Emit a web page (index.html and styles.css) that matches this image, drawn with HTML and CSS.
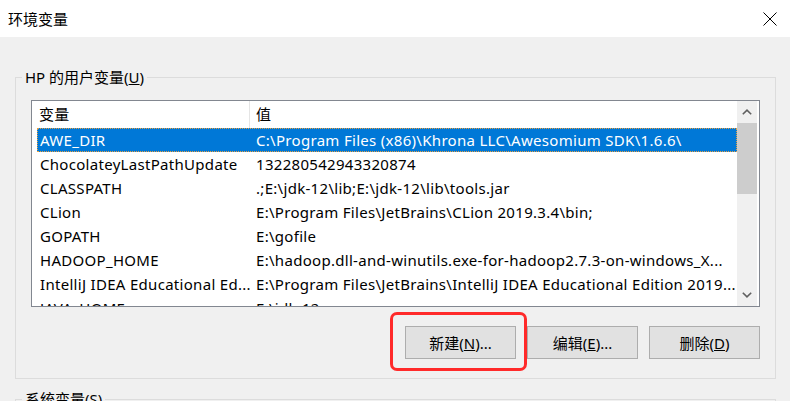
FILE: index.html
```html
<!DOCTYPE html>
<html lang="zh-CN">
<head>
<meta charset="utf-8">
<title>环境变量</title>
<link rel="stylesheet" href="styles.css">
</head>
<body>
<div class="window">
  <div class="titlebar">
    <span class="title">环境变量</span>
    <svg class="close" width="14" height="14" viewBox="0 0 14 14"><path d="M0.5 0.5 L13.5 13.5 M13.5 0.5 L0.5 13.5" stroke="#000" stroke-width="1" fill="none"/></svg>
  </div>
  <div class="main">
    <fieldset class="group">
      <legend class="legend">HP 的用户变量(<u>U</u>)</legend>
      <div class="group-body">
        <div class="listbox">
          <div class="list-main">
            <div class="list-head">
              <div class="hcell hcell-name">变量</div>
              <div class="hcell hcell-value">值</div>
            </div>
            <div class="row selected"><div class="c1">AWE_DIR</div><div class="c2">C:\Program Files (x86)\Khrona LLC\Awesomium SDK\1.6.6\</div></div>
            <div class="row"><div class="c1">ChocolateyLastPathUpdate</div><div class="c2">132280542943320874</div></div>
            <div class="row"><div class="c1">CLASSPATH</div><div class="c2">.;E:\jdk-12\lib;E:\jdk-12\lib\tools.jar</div></div>
            <div class="row"><div class="c1">CLion</div><div class="c2">E:\Program Files\JetBrains\CLion 2019.3.4\bin;</div></div>
            <div class="row"><div class="c1">GOPATH</div><div class="c2">E:\gofile</div></div>
            <div class="row"><div class="c1">HADOOP_HOME</div><div class="c2">E:\hadoop.dll-and-winutils.exe-for-hadoop2.7.3-on-windows_X...</div></div>
            <div class="row"><div class="c1">IntelliJ IDEA Educational Ed...</div><div class="c2">E:\Program Files\JetBrains\IntelliJ IDEA Educational Edition 2019...</div></div>
            <div class="row"><div class="c1">JAVA_HOME</div><div class="c2">E:\jdk-12</div></div>
          </div>
          <div class="scrollbar">
            <div class="sb-btn">
              <svg width="10" height="6" viewBox="0 0 10 6"><path d="M0.8 5.3 L5 1.2 L9.2 5.3" stroke="#606060" stroke-width="1.6" fill="none"/></svg>
            </div>
            <div class="sb-track"><div class="sb-thumb"></div></div>
            <div class="sb-btn">
              <svg width="10" height="6" viewBox="0 0 10 6"><path d="M0.8 0.7 L5 4.8 L9.2 0.7" stroke="#606060" stroke-width="1.6" fill="none"/></svg>
            </div>
          </div>
        </div>
        <div class="buttons">
          <div class="btn-wrap">
            <button class="btn">新建(<u>N</u>)...</button>
            <div class="highlight"></div>
          </div>
          <button class="btn">编辑(<u>E</u>)...</button>
          <button class="btn">删除(<u>D</u>)</button>
        </div>
      </div>
    </fieldset>
    <fieldset class="group group-sys">
      <legend class="legend">系统变量(<u>S</u>)</legend>
      <div class="group-body"></div>
    </fieldset>
  </div>
</div>
</body>
</html>
```

FILE: styles.css
```css
html, body {
  margin: 0;
  padding: 0;
  width: 790px;
  height: 401px;
  overflow: hidden;
  background: #f0f0f0;
}

body {
  font-family: "Noto Sans", "Noto Sans CJK SC", sans-serif;
  font-size: 15px;
  letter-spacing: 0.3px;
  color: #000;
}

.window {
  width: 790px;
  height: 401px;
  overflow: hidden;
}

.titlebar {
  height: 37px;
  background: #fff;
  display: flex;
  align-items: center;
  justify-content: space-between;
  padding: 0 13px 0 8px;
  box-sizing: border-box;
}

.title {
  font-size: 15px;
  line-height: 20px;
  letter-spacing: 0;
}

.close {
  display: block;
}

.main {
  padding-left: 15px;
}

.group {
  width: 761px;
  box-sizing: border-box;
  margin: 30px 0 0 0;
  padding: 0;
  border: 1px solid #dcdcdc;
}

.group-sys {
  margin-top: 10px;
  height: 60px;
}

.legend {
  margin-left: 6px;
  padding: 0 3px;
  line-height: 20px;
  font-size: 15px;
  letter-spacing: 0;
}

.group-body {
  padding: 13px 15px 19px 15px;
}

.listbox {
  width: 729px;
  height: 207px;
  box-sizing: border-box;
  border: 1px solid #828790;
  background: #fff;
  display: flex;
  overflow: hidden;
}

.list-main {
  flex: 1;
  overflow: hidden;
  min-width: 0;
}

.list-head {
  display: flex;
  height: 27px;
  line-height: 27px;
}

.hcell {
  box-sizing: border-box;
  white-space: nowrap;
}

.hcell-name {
  width: 218px;
  padding-left: 7px;
  border-right: 1px solid #e5e5e5;
}

.hcell-value {
  padding-left: 6px;
}

.row {
  display: flex;
  height: 24px;
  line-height: 22px;
  margin-left: 5px;
  box-sizing: border-box;
  border: 1px dotted transparent;
  white-space: nowrap;
}

.row.selected {
  background: #0078d7;
  color: #fff;
  border-color: #e8a040;
}

.c1 {
  width: 213px;
  flex: none;
  box-sizing: border-box;
  padding-left: 2px;
  overflow: hidden;
}

.c2 {
  flex: 1;
  min-width: 0;
  padding-left: 5px;
  overflow: hidden;
  text-overflow: ellipsis;
}

.scrollbar {
  width: 20px;
  flex: none;
  margin-right: 2px;
  background: #f0f0f0;
  display: flex;
  flex-direction: column;
}

.sb-btn {
  height: 22px;
  flex: none;
  display: flex;
  align-items: center;
  justify-content: center;
}

.sb-btn svg {
  display: block;
}

.sb-track {
  flex: 1;
}

.sb-thumb {
  height: 71px;
  background: #cdcdcd;
}

.buttons {
  display: flex;
  justify-content: flex-end;
  gap: 11px;
  width: 729px;
  margin-top: 19px;
}

.btn-wrap {
  position: relative;
  display: flex;
}

.btn {
  width: 111px;
  height: 33px;
  box-sizing: border-box;
  border: 1px solid #adadad;
  background: #e1e1e1;
  font-family: "Noto Sans", "Noto Sans CJK SC", sans-serif;
  font-size: 15px;
  letter-spacing: 0;
  color: #000;
  padding: 0;
  margin: 0;
  border-radius: 0;
}

.highlight {
  position: absolute;
  left: -15px;
  top: -14px;
  right: -11px;
  bottom: -12px;
  border: 3px solid #ff2a2a;
  border-radius: 7px;
  pointer-events: none;
}
```
